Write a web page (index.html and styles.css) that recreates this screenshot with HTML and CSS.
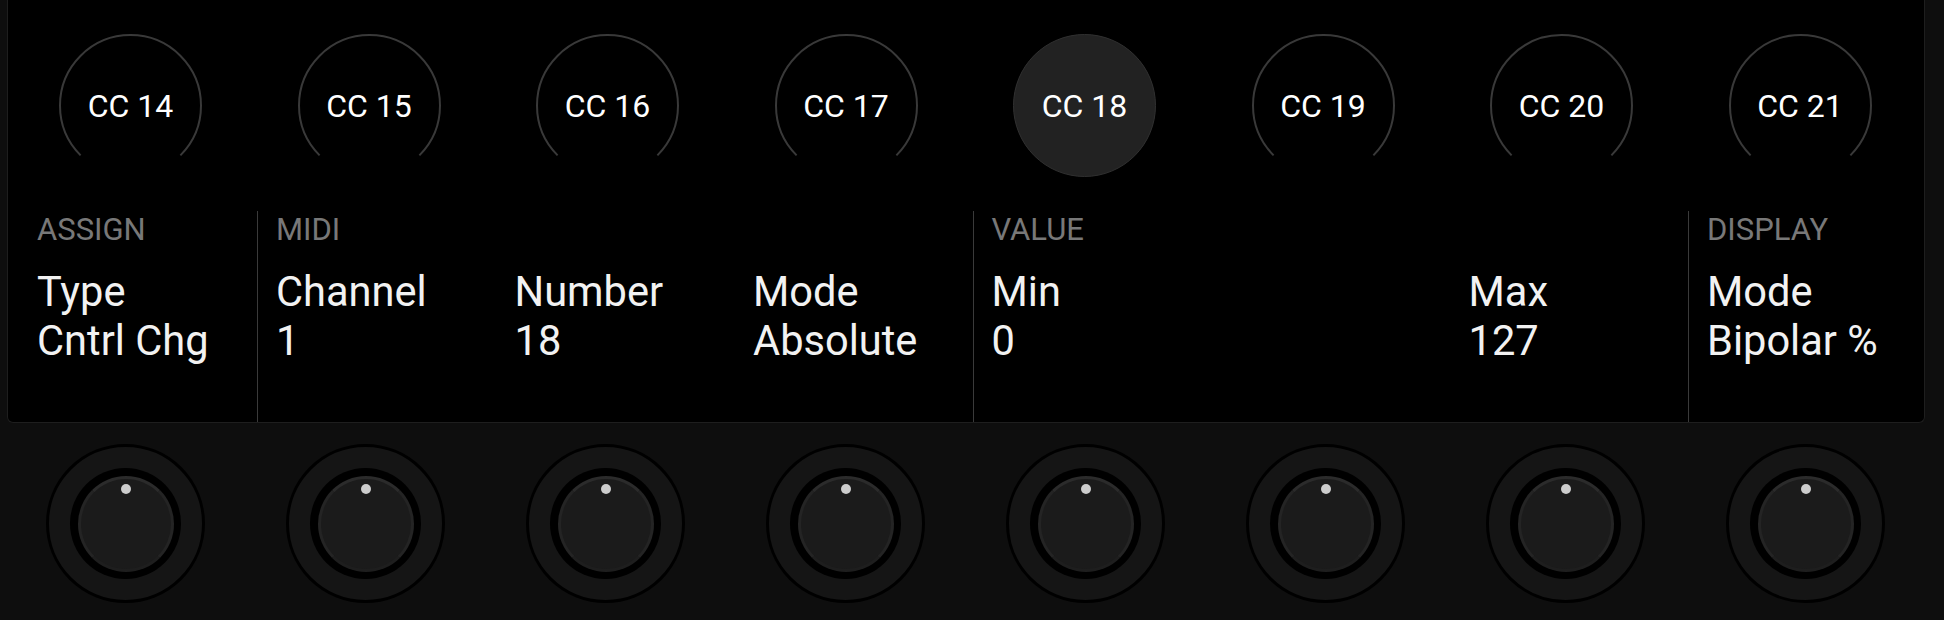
FILE: index.html
```html
<!DOCTYPE html>
<html>
<head>
<meta charset="utf-8">
<link rel="stylesheet" href="styles.css">
</head>
<body>
<div class="app">
  <div class="screen">
    <div class="encoders">
      <div class="enc"><svg class="ring" viewBox="0 0 143 143"><path d="M21.6 121.4 A70.5 70.5 0 1 1 121.4 121.4"/></svg><span class="enc-label">CC 14</span></div>
      <div class="enc"><svg class="ring" viewBox="0 0 143 143"><path d="M21.6 121.4 A70.5 70.5 0 1 1 121.4 121.4"/></svg><span class="enc-label">CC 15</span></div>
      <div class="enc"><svg class="ring" viewBox="0 0 143 143"><path d="M21.6 121.4 A70.5 70.5 0 1 1 121.4 121.4"/></svg><span class="enc-label">CC 16</span></div>
      <div class="enc"><svg class="ring" viewBox="0 0 143 143"><path d="M21.6 121.4 A70.5 70.5 0 1 1 121.4 121.4"/></svg><span class="enc-label">CC 17</span></div>
      <div class="enc enc-active"><span class="enc-label">CC 18</span></div>
      <div class="enc"><svg class="ring" viewBox="0 0 143 143"><path d="M21.6 121.4 A70.5 70.5 0 1 1 121.4 121.4"/></svg><span class="enc-label">CC 19</span></div>
      <div class="enc"><svg class="ring" viewBox="0 0 143 143"><path d="M21.6 121.4 A70.5 70.5 0 1 1 121.4 121.4"/></svg><span class="enc-label">CC 20</span></div>
      <div class="enc"><svg class="ring" viewBox="0 0 143 143"><path d="M21.6 121.4 A70.5 70.5 0 1 1 121.4 121.4"/></svg><span class="enc-label">CC 21</span></div>
    </div>
    <div class="sections">
      <section class="sec sec-first">
        <div class="sec-label">ASSIGN</div>
        <div class="items items-single">
          <div class="item"><div>Type</div><div>Cntrl Chg</div></div>
        </div>
      </section>
      <section class="sec">
        <div class="sec-label">MIDI</div>
        <div class="items">
          <div class="item"><div>Channel</div><div>1</div></div>
          <div class="item"><div>Number</div><div>18</div></div>
          <div class="item"><div>Mode</div><div>Absolute</div></div>
        </div>
      </section>
      <section class="sec">
        <div class="sec-label">VALUE</div>
        <div class="items">
          <div class="item"><div>Min</div><div>0</div></div>
          <div class="item item-col3"><div>Max</div><div>127</div></div>
        </div>
      </section>
      <section class="sec sec-last">
        <div class="sec-label">DISPLAY</div>
        <div class="items items-single">
          <div class="item"><div>Mode</div><div>Bipolar %</div></div>
        </div>
      </section>
    </div>
  </div>
  <div class="knobs">
    <div class="knob"><div class="knob-ring"><div class="knob-cap"><span class="knob-dot"></span></div></div></div>
    <div class="knob"><div class="knob-ring"><div class="knob-cap"><span class="knob-dot"></span></div></div></div>
    <div class="knob"><div class="knob-ring"><div class="knob-cap"><span class="knob-dot"></span></div></div></div>
    <div class="knob"><div class="knob-ring"><div class="knob-cap"><span class="knob-dot"></span></div></div></div>
    <div class="knob"><div class="knob-ring"><div class="knob-cap"><span class="knob-dot"></span></div></div></div>
    <div class="knob"><div class="knob-ring"><div class="knob-cap"><span class="knob-dot"></span></div></div></div>
    <div class="knob"><div class="knob-ring"><div class="knob-cap"><span class="knob-dot"></span></div></div></div>
    <div class="knob"><div class="knob-ring"><div class="knob-cap"><span class="knob-dot"></span></div></div></div>
  </div>
</div>
</body>
</html>
```
FILE: styles.css
```css
* { box-sizing: border-box; }
html, body {
  margin: 0;
  padding: 0;
  background: #0e0e0e;
  width: 1944px;
  height: 620px;
  overflow: hidden;
  font-family: Roboto, "Liberation Sans", sans-serif;
}
.app {
  width: 1944px;
  height: 620px;
  display: flex;
  flex-direction: column;
}
.screen {
  margin-left: 7px;
  width: 1918px;
  height: 423px;
  background: #000;
  border: 1px solid #1e1e1e;
  border-top: none;
  border-radius: 0 0 6px 6px;
  display: flex;
  flex-direction: column;
  overflow: hidden;
}
.encoders {
  display: grid;
  grid-template-columns: repeat(8, 238.5px);
  padding-left: 3.25px;
  padding-top: 34px;
}
.enc {
  position: relative;
  justify-self: center;
  width: 143px;
  height: 143px;
  display: flex;
  align-items: center;
  justify-content: center;
  border-radius: 50%;
}
.enc-active {
  background: #222;
  border: 1px solid #303030;
}
.ring {
  position: absolute;
  left: 0;
  top: 0;
  width: 143px;
  height: 143px;
  overflow: visible;
}
.ring path {
  fill: none;
  stroke: #393939;
  stroke-width: 2;
}
.enc-label {
  position: relative;
  color: #fff;
  font-size: 32px;
  line-height: 36px;
  margin-top: 1px;
}
.sections {
  flex: 1;
  margin-top: 34px;
  display: grid;
  grid-template-columns: 238.5px 715.5px 715.5px 1fr;
  padding-left: 10.5px;
}
.sec {
  border-left: 1px solid #3a3a3a;
  padding-left: 18px;
  min-width: 0;
}
.sec-first {
  border-left: none;
  padding-left: 18.5px;
}
.sec-label {
  color: #787878;
  font-size: 31px;
  line-height: 36px;
  padding-top: 1px;
}
.items {
  margin-top: 20px;
  display: grid;
  grid-template-columns: repeat(3, 238.5px);
}
.items-single {
  grid-template-columns: 1fr;
}
.item {
  color: #f2f2f2;
  font-size: 41.6px;
  line-height: 48.5px;
  white-space: nowrap;
}
.item-col3 {
  grid-column: 3;
}
.knobs {
  display: grid;
  grid-template-columns: repeat(8, 240px);
  padding-left: 5.5px;
  padding-top: 21px;
}
.knob {
  justify-self: center;
  width: 159px;
  height: 159px;
  border-radius: 50%;
  background: #151515;
  border: 3px solid #000;
  display: flex;
  align-items: center;
  justify-content: center;
}
.knob-ring {
  width: 111px;
  height: 111px;
  border-radius: 50%;
  background: #000;
  display: flex;
  align-items: center;
  justify-content: center;
}
.knob-cap {
  position: relative;
  width: 96px;
  height: 96px;
  border-radius: 50%;
  background: #1b1b1b;
  border: 3px solid #242424;
  border-top-color: #2b2b2b;
  border-bottom-color: #1e1e1e;
}
.knob-dot {
  position: absolute;
  left: 50%;
  top: 5.5px;
  width: 10px;
  height: 10px;
  margin-left: -5px;
  border-radius: 50%;
  background: #cdcdcd;
}
```
